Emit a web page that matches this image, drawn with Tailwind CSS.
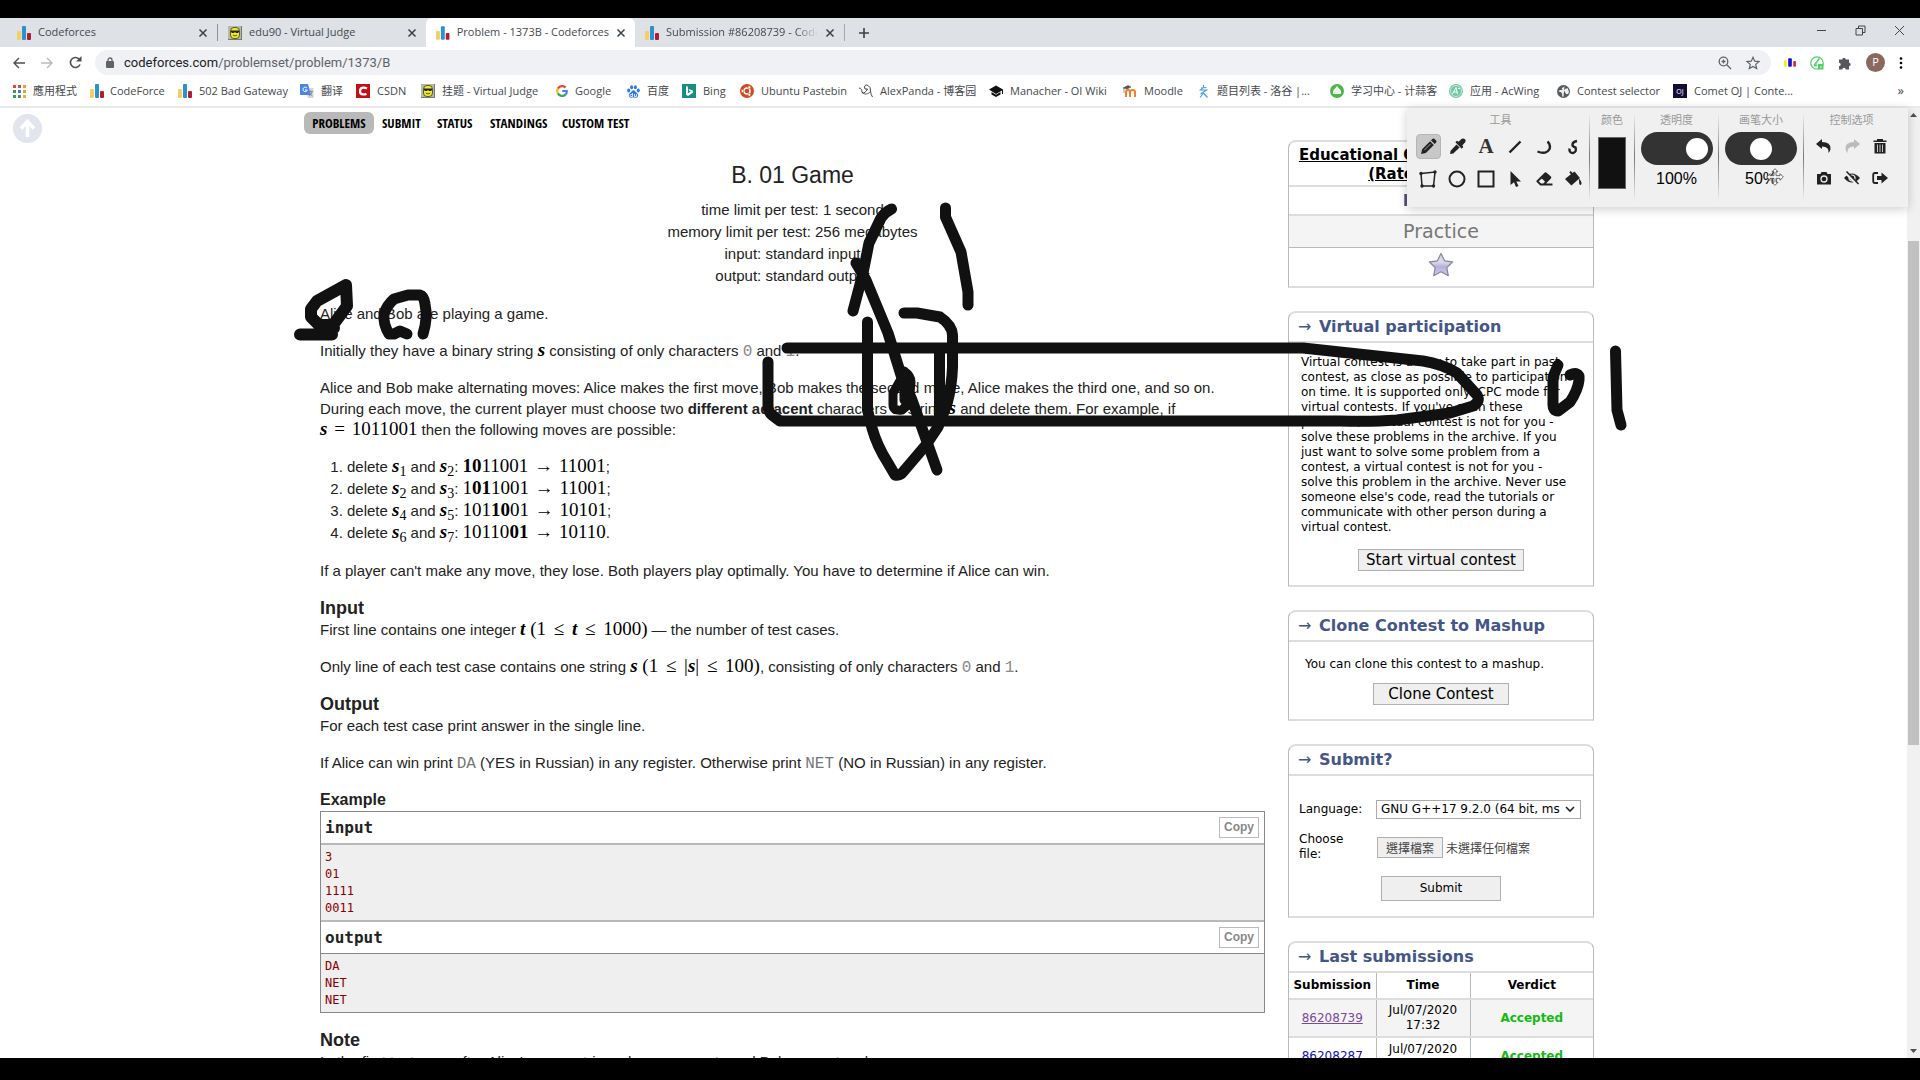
<!DOCTYPE html>
<html lang="en">
<head>
    <meta charset="UTF-8">
    <meta name="viewport" content="width=device-width, initial-scale=1.0">
    <title>Problem - 1373B - Codeforces</title>
    <script src="https://cdn.jsdelivr.net/npm/@tailwindcss/browser@4"></script>
</head>
<body class="bg-black">
    <!-- Shared icons -->
    <svg class="hidden">
        <symbol id="i-bars" viewBox="0 0 14 14">
            <rect x="0" y="5" width="4" height="9" rx="1" fill="#f6cf60"/>
            <rect x="5" y="0" width="4" height="14" rx="1" fill="#2a93cf"/>
            <rect x="10" y="7" width="4" height="7" rx="1" fill="#b01e2f"/>
        </symbol>
        <symbol id="i-vj" viewBox="0 0 14 14">
            <rect width="14" height="14" fill="#77776c"/>
            <rect width="13" height="13" fill="#b9b9a8"/>
            <rect x="2.500" y="1.500" width="9" height="11" rx="3.500" fill="#f3ee1c" stroke="#333" stroke-width=".8"/>
            <path d="M3 4.500h8v1.500l-1 1H8L7 6 6 7H4L3 6z" fill="#222"/>
            <path d="M4.800 9q2.200 2 4.400 0" fill="none" stroke="#222" stroke-width=".8"/>
        </symbol>
        <symbol id="i-x" viewBox="0 0 10 10">
            <path d="M1.500 1.500l7 7M8.500 1.500l-7 7" stroke="#3c4043" stroke-width="1.500" fill="none"/>
        </symbol>
    </svg>

    <div class="relative h-screen overflow-hidden">
        <div class="flex h-full flex-col pt-[18px] pb-[22px]">
            <!-- Tab strip -->
            <header class="shrink-0 bg-white font-['Open_Sans','Noto_Sans_CJK_TC',sans-serif] text-[11px] text-[#45494d]">
                <div class="flex h-[29px] items-stretch bg-[#dee1e6]">
                    <div class="flex w-[217px] items-center gap-[7px] pl-[17px] pr-[9px]">
                        <svg class="size-[14px]"><use href="#i-bars"/></svg>
                        <span class="flex-1">Codeforces</span>
                        <button aria-label="Close tab"><svg class="size-[10px]"><use href="#i-x"/></svg></button>
                    </div>
                    <div class="my-[6px] w-px bg-[#8c9095]"></div>
                    <div class="flex w-[208px] items-center gap-[7px] pl-[10px] pr-[9px]">
                        <svg class="size-[14px]"><use href="#i-vj"/></svg>
                        <span class="flex-1">edu90 - Virtual Judge</span>
                        <button aria-label="Close tab"><svg class="size-[10px]"><use href="#i-x"/></svg></button>
                    </div>
                    <div class="flex w-[209px] items-center gap-[7px] rounded-t-md bg-white pl-[10px] pr-[9px]">
                        <svg class="size-[14px]"><use href="#i-bars"/></svg>
                        <span class="flex-1 whitespace-nowrap">Problem - 1373B - Codeforces</span>
                        <button aria-label="Close tab"><svg class="size-[10px]"><use href="#i-x"/></svg></button>
                    </div>
                    <div class="flex w-[209px] items-center gap-[7px] pl-[10px] pr-[9px]">
                        <svg class="size-[14px] shrink-0"><use href="#i-bars"/></svg>
                        <span class="flex-1 overflow-hidden whitespace-nowrap mask-r-from-85%">Submission #86208739 - Codeforces</span>
                        <button aria-label="Close tab"><svg class="size-[10px]"><use href="#i-x"/></svg></button>
                    </div>
                    <div class="my-[6px] w-px bg-[#a5a8ac]"></div>
                    <button class="px-[13px]" aria-label="New tab">
                        <svg class="size-[12px]" viewBox="0 0 12 12"><path d="M6 1v10M1 6h10" stroke="#3c4043" stroke-width="1.600"/></svg>
                    </button>
                    <div class="ml-auto flex items-center gap-[28px] pb-[4px] pr-[15px]">
                        <button aria-label="Minimize"><svg class="size-[11px]" viewBox="0 0 11 11"><path d="M1 5.500h9" stroke="#444"/></svg></button>
                        <button aria-label="Restore"><svg class="size-[11px]" viewBox="0 0 11 11"><path d="M1 3.500h6.500V10H1zM3.500 3V1H10v6.500H8" fill="none" stroke="#444"/></svg></button>
                        <button aria-label="Close window"><svg class="size-[11px]" viewBox="0 0 11 11"><path d="M1 1l9 9M10 1l-9 9" stroke="#444"/></svg></button>
                    </div>
                </div>

                <!-- Address bar -->
                <div class="flex h-[31px] items-center">
                    <div class="flex w-[95px] items-center gap-[16px] pl-[13px]">
                        <button aria-label="Back"><svg class="size-[12px]" viewBox="0 0 12 12"><path d="M12 6H1M6 1L1 6l5 5" fill="none" stroke="#4c5054" stroke-width="1.400"/></svg></button>
                        <button aria-label="Forward"><svg class="size-[12px]" viewBox="0 0 12 12"><path d="M0 6h11M6 1l5 5-5 5" fill="none" stroke="#b8babd" stroke-width="1.400"/></svg></button>
                        <button aria-label="Reload"><svg class="size-[13px]" viewBox="0 0 13 13"><path d="M11 8.500A5 5 0 1 1 10.500 3.500" fill="none" stroke="#4c5054" stroke-width="1.600"/><path d="M12.500 0v5.500H7z" fill="#4c5054"/></svg></button>
                    </div>
                    <div class="flex h-[25px] flex-1 items-center rounded-full bg-[#eff1f4] px-[11px] font-[Roboto,sans-serif] text-[13px]">
                        <svg class="mr-[10px] h-[11px] w-[8px]" viewBox="0 0 8 11"><rect y="4" width="8" height="7" rx="1" fill="#5f6368"/><path d="M2 4V3a2 2 0 0 1 4 0v1" fill="none" stroke="#5f6368" stroke-width="1.300"/></svg>
                        <label for="url" class="text-[#202124]">codeforces.com</label>
                        <input id="url" type="text" value="/problemset/problem/1373/B" class="min-w-0 flex-1 bg-transparent text-[#5f6368] outline-none">
                        <button class="mr-[14px]" aria-label="Zoom"><svg class="size-[14px]" viewBox="0 0 14 14"><circle cx="5.500" cy="5.500" r="4.300" fill="none" stroke="#5f6368" stroke-width="1.300"/><path d="M8.800 8.800L13 13M5.500 3.500v4M3.500 5.500h4" stroke="#5f6368" stroke-width="1.300"/></svg></button>
                        <button aria-label="Bookmark"><svg class="size-[14px]" viewBox="0 0 14 14"><path d="M7 1.300l1.700 3.900 4.200.4-3.200 2.800 1 4.200L7 10.400l-3.700 2.200 1-4.200L1.100 5.600l4.200-.4z" fill="none" stroke="#5f6368" stroke-width="1.200"/></svg></button>
                    </div>
                    <div class="flex items-center gap-[14px] pl-[13px] pr-[17px]">
                        <svg class="h-[9px] w-[12px]" viewBox="0 0 13 9"><rect y="2" width="3" height="7" rx="1" fill="#fdf000"/><rect x="4.500" width="4" height="9" rx="1" fill="#1a12d8"/><rect x="10" y="3" width="3" height="6" rx="1" fill="#e8252c"/></svg>
                        <svg class="size-[14px]" viewBox="0 0 14 14"><circle cx="7" cy="7" r="6.200" fill="#fff" stroke="#52d266" stroke-width="1.300"/><path d="M4 9.500L9.500 2.500M4 9.500q2 1 3-1" fill="none" stroke="#52d266" stroke-width="1.500"/><path d="M8 8h5.500v5.500H8z" fill="#52d266"/><path d="M10 11.500l1-1.500 1 1.500z" fill="#fff"/></svg>
                        <svg class="size-[14px]" viewBox="0 0 14 14"><path d="M1 3.500h3.300a1.700 1.700 0 1 1 3.400 0H11v3.200a1.700 1.700 0 1 1 0 3.400V13.500H7.700a1.700 1.700 0 1 0-3.400 0H1v-3.300a1.700 1.700 0 1 0 0-3.400z" fill="#54585c"/></svg>
                        <button class="size-[19px] rounded-full bg-[#8a675f] text-white">P</button>
                        <button aria-label="Menu"><svg class="h-[12px] w-[4px]" viewBox="0 0 4 12"><circle cx="2" cy="1.500" r="1.300"/><circle cx="2" cy="6" r="1.300"/><circle cx="2" cy="10.500" r="1.300"/></svg></button>
                    </div>
                </div>

                <!-- Bookmarks -->
                <nav class="flex h-[30px] items-center border-b-2 border-[#e8eaed] pl-[13px] pb-[2px] whitespace-nowrap">
                    <a href="#" class="flex w-[77px] items-center gap-[7px]">
                        <svg class="size-[13px]" viewBox="0 0 13 13"><g fill="#e0493c"><rect width="3" height="3"/><rect x="5" width="3" height="3"/><rect x="10" width="3" height="3" fill="#e8a030"/></g><g fill="#3b9b58"><rect y="5" width="3" height="3"/><rect x="5" y="5" width="3" height="3" fill="#3c7de0"/><rect x="10" y="5" width="3" height="3" fill="#e8a030"/><rect y="10" width="3" height="3"/><rect x="5" y="10" width="3" height="3"/><rect x="10" y="10" width="3" height="3" fill="#e8b040"/></g></svg>應用程式</a>
                    <a href="#" class="flex w-[88px] items-center gap-[6px]"><svg class="size-[14px]"><use href="#i-bars"/></svg>CodeForce</a>
                    <a href="#" class="flex w-[122px] items-center gap-[7px]"><svg class="size-[14px]"><use href="#i-bars"/></svg>502 Bad Gateway</a>
                    <a href="#" class="flex w-[56px] items-center gap-[7px]">
                        <svg class="size-[14px]" viewBox="0 0 14 14"><path d="M5 4h8.500v10H8z" fill="#d4d7dc"/><path d="M0 0h8l3 11H0z" fill="#4a86e8"/><path d="M7 4.200A2.200 2.200 0 1 0 7.300 6H5" fill="none" stroke="#fff"/><path d="M8.500 7.500H13M10.700 6.500v1M9 12q3-1.500 3-4.500M9.500 8.500q1 2.500 3 3.500" fill="none" stroke="#7a7f87" stroke-width=".8"/></svg>翻译</a>
                    <a href="#" class="flex w-[65px] items-center gap-[7px]">
                        <svg class="size-[14px]" viewBox="0 0 14 14"><rect width="14" height="14" fill="#c40f14"/><path d="M11 4.500Q9 3.500 7 3.700 4 4 4 7.200t3 3.200q2 .2 3.500-.700" fill="none" stroke="#fff" stroke-width="2.200"/></svg>CSDN</a>
                    <a href="#" class="flex w-[135px] items-center gap-[7px]"><svg class="size-[14px]"><use href="#i-vj"/></svg>挂题 - Virtual Judge</a>
                    <a href="#" class="flex w-[71px] items-center gap-[7px]">
                        <svg class="size-[12px]" viewBox="0 0 12 12" fill="none" stroke-width="2.200"><path d="M9.600 2.600A4.800 4.800 0 0 0 1.900 3.600" stroke="#ea4335"/><path d="M1.900 3.600a4.800 4.800 0 0 0 0 4.800" stroke="#fbbc05"/><path d="M1.900 8.400a4.800 4.800 0 0 0 7.500 1.200" stroke="#34a853"/><path d="M9.400 9.600Q11 8 10.800 6H6.200" stroke="#4285f4"/></svg>Google</a>
                    <a href="#" class="flex w-[55px] items-center gap-[7px]">
                        <svg class="size-[13px]" viewBox="0 0 13 13" fill="#2e78e4"><ellipse cx="1.700" cy="5.500" rx="1.500" ry="2"/><ellipse cx="4.600" cy="2.200" rx="1.500" ry="2"/><ellipse cx="8.400" cy="2.200" rx="1.500" ry="2"/><ellipse cx="11.300" cy="5.500" rx="1.500" ry="2"/><path d="M6.500 5.200c1.500 0 2 1.500 3.200 2.500s2 2.300 1 4c-1 1.500-2.500.8-4.200.8s-3.200.7-4.200-.8c-1-1.700-.2-3 1-4s1.700-2.500 3.200-2.500z"/><path d="M5.500 8v3.500H4a1 1 0 0 1 0-2h1.500M7.500 9v2.500h2V9" fill="none" stroke="#fff" stroke-width=".8"/></svg>百度</a>
                    <a href="#" class="flex w-[58px] items-center gap-[7px]">
                        <svg class="size-[14px]" viewBox="0 0 14 14"><rect width="14" height="14" fill="#168f80"/><path d="M4 2l2 .7v6.500l2.700-1.600-1.300-.6-.8-2 4.300 1.500v2.200L6 12l-2-1.200z" fill="#fff"/></svg>Bing</a>
                    <a href="#" class="flex w-[119px] items-center gap-[7px]">
                        <svg class="size-[14px]" viewBox="0 0 14 14"><circle cx="7" cy="7" r="7" fill="#cf4a1c"/><circle cx="7" cy="7" r="3" fill="none" stroke="#fff" stroke-width="1.500"/><g fill="#fff" stroke="#cf4a1c" stroke-width=".6"><circle cx="2.600" cy="7" r="1.500"/><circle cx="9.300" cy="3.200" r="1.500"/><circle cx="9.300" cy="10.800" r="1.500"/></g></svg>Ubuntu Pastebin</a>
                    <a href="#" class="flex w-[130px] items-center gap-[7px]">
                        <svg class="size-[14px]" viewBox="0 0 14 14" fill="none" stroke="#444"><path d="M0 4q3 0 3 4.500Q6 10 8.500 5 5 6 5.500 3T9 1.500t2.500 5.500q.3 4 2 6"/><path d="M3 8.500Q7 12 11 8" stroke-width=".8"/></svg>AlexPanda - 博客园</a>
                    <a href="#" class="flex w-[134px] items-center gap-[7px]">
                        <svg class="size-[14px]" viewBox="0 0 14 14"><path d="M7 1.500L14 5.500v4.500h-1V6.500l-6 3.500L0 5.500z" fill="#111"/><path d="M2.500 8v2.500L7 13l4.500-2.500V8L7 10.800z" fill="#111"/></svg>Manacher - OI Wiki</a>
                    <a href="#" class="flex w-[74px] items-center gap-[7px]">
                        <svg class="size-[14px]" viewBox="0 0 14 14" fill="none"><path d="M3 13V8q0-2 2-2t2 2v5M7 13V8q0-2 2.500-2T12 8v5" stroke="#f08030" stroke-width="2"/><path d="M0 4l5-2.500L8 3 4 5zM1 4.500V9" fill="#555" stroke="#555" stroke-width=".6"/></svg>Moodle</a>
                    <a href="#" class="flex w-[133px] items-center gap-[7px]">
                        <svg class="size-[13px]" viewBox="0 0 13 13" fill="none" stroke="#4e9fe0" stroke-width="1.200"><path d="M6.500 0v2.500L3.500 5h6L3.500 9M3 12.500L6.500 8M5.500 7l5 5.500M4 3l5.500-.500"/></svg>题目列表 - 洛谷 |...</a>
                    <a href="#" class="flex w-[119px] items-center gap-[7px]">
                        <svg class="size-[14px]" viewBox="0 0 14 14"><circle cx="7" cy="7" r="7" fill="#4db748"/><path d="M7 2q1.500 2 3 3.500 2 2.500.5 4.500H3.500Q2 8 4 5.500 5.500 4 7 2z" fill="#fff"/><path d="M7 5v5M5 7v3M9 7v3" stroke="#b4e0b2" stroke-width=".6"/></svg>学习中心 - 计蒜客</a>
                    <a href="#" class="flex w-[108px] items-center gap-[7px]">
                        <svg class="size-[14px]" viewBox="0 0 14 14"><circle cx="7" cy="7" r="7" fill="#6cc8a8"/><circle cx="7" cy="7" r="5.500" fill="none" stroke="#d8f2d0" stroke-width=".8"/><path d="M3.500 10L7 3.500 8.500 10M5 8h3M9 4.500h2" fill="none" stroke="#fff"/></svg>应用 - AcWing</a>
                    <a href="#" class="flex w-[116px] items-center gap-[7px]">
                        <svg class="size-[13px]" viewBox="0 0 14 14"><circle cx="7" cy="7" r="7" fill="#555a5f"/><path d="M8 1.500L5 3.500l1 2H3L1.500 7l2.500.500 1.500 2V12L7 12.800M9 4l2.500-.500L12.800 7l-.5 2.500L10 10 8.500 7.500 7.500 6z" fill="#eee"/></svg>Contest selector</a>
                    <a href="#" class="flex items-center gap-[7px]">
                        <span class="flex size-[14px] items-center justify-center bg-[#120c36] text-[7px] leading-none text-white">OJ</span>Comet OJ | Conte...</a>
                    <button class="ml-auto pr-[16px] text-[13px]" aria-label="More bookmarks">»</button>
                </nav>
            </header>

            <!-- Page -->
            <div class="flex min-h-0 flex-1 bg-white">
                <div class="relative flex-1 overflow-hidden">
                    <button class="absolute left-[13px] top-[6px]" aria-label="Scroll to top">
                        <svg class="size-[29px]" viewBox="0 0 29 29"><circle cx="14.500" cy="14.500" r="14.500" fill="#e2e4ee"/><path d="M14.500 23V8M8 14.500L14.500 7.500 21 14.500" fill="none" stroke="#fff" stroke-width="3.600"/></svg>
                    </button>
                    <div class="flex gap-[23px] pl-[304px] pr-[313px]">
                        <main class="min-w-0 flex-1 font-['Liberation_Sans',Arial,sans-serif] text-[15px] leading-[21px] text-[#222]">
                            <nav class="flex pt-[4px] font-['Open_Sans_Condensed','Roboto_Condensed',sans-serif] text-[13px] leading-[22px] font-bold text-black">
                                <a href="#" class="w-[70px] rounded-md bg-[#b9b9b9] text-center">PROBLEMS</a>
                                <a href="#" class="w-[55px] pl-[8px]">SUBMIT</a>
                                <a href="#" class="w-[53px] pl-[8px]">STATUS</a>
                                <a href="#" class="w-[72px] pl-[8px]">STANDINGS</a>
                                <a href="#" class="pl-[8px]">CUSTOM TEST</a>
                            </nav>

                            <article class="space-y-[16px] pl-[16px] pt-[27px]">
                                <div class="text-center leading-[22px]">
                                    <h1 class="mb-[10px] text-[23px] leading-[28px]">B. 01 Game</h1>
                                    <p>time limit per test: 1 second</p>
                                    <p>memory limit per test: 256 megabytes</p>
                                    <p>input: standard input</p>
                                    <p>output: standard output</p>
                                </div>
                                <p>Alice and Bob are playing a game.</p>
                                <p>Initially they have a binary string <i class="font-['Liberation_Serif',serif] text-[19px] leading-none font-bold text-black">s</i> consisting of only characters <code class="font-['Liberation_Mono',monospace] text-[16px] leading-none text-[#888]">0</code> and <code class="font-['Liberation_Mono',monospace] text-[16px] leading-none text-[#888]">1</code>.</p>
                                <p>Alice and Bob make alternating moves: Alice makes the first move, Bob makes the second move, Alice makes the third one, and so on.<br>
                                    During each move, the current player must choose two <b>different adjacent</b> characters of string <i class="font-['Liberation_Serif',serif] text-[19px] leading-none font-bold text-black">s</i> and delete them. For example, if<br>
                                    <span class="font-['Liberation_Serif',serif] text-[19px] leading-none text-black"><b><i>s</i></b> <span class="px-[2px]">=</span> 1011001</span> then the following moves are possible:</p>
                                <ol class="list-decimal pl-[27px] leading-[22px]">
                                    <li>delete <span class="font-['Liberation_Serif',serif] text-[19px] leading-none text-black"><b><i>s</i></b><sub class="text-[14px]">1</sub></span> and <span class="font-['Liberation_Serif',serif] text-[19px] leading-none text-black"><b><i>s</i></b><sub class="text-[14px]">2</sub></span>: <span class="font-['Liberation_Serif',serif] text-[19px] leading-none text-black"><b>10</b>11001 <span class="px-[1px]">→</span> 11001</span>;</li>
                                    <li>delete <span class="font-['Liberation_Serif',serif] text-[19px] leading-none text-black"><b><i>s</i></b><sub class="text-[14px]">2</sub></span> and <span class="font-['Liberation_Serif',serif] text-[19px] leading-none text-black"><b><i>s</i></b><sub class="text-[14px]">3</sub></span>: <span class="font-['Liberation_Serif',serif] text-[19px] leading-none text-black">1<b>01</b>1001 <span class="px-[1px]">→</span> 11001</span>;</li>
                                    <li>delete <span class="font-['Liberation_Serif',serif] text-[19px] leading-none text-black"><b><i>s</i></b><sub class="text-[14px]">4</sub></span> and <span class="font-['Liberation_Serif',serif] text-[19px] leading-none text-black"><b><i>s</i></b><sub class="text-[14px]">5</sub></span>: <span class="font-['Liberation_Serif',serif] text-[19px] leading-none text-black">101<b>10</b>01 <span class="px-[1px]">→</span> 10101</span>;</li>
                                    <li>delete <span class="font-['Liberation_Serif',serif] text-[19px] leading-none text-black"><b><i>s</i></b><sub class="text-[14px]">6</sub></span> and <span class="font-['Liberation_Serif',serif] text-[19px] leading-none text-black"><b><i>s</i></b><sub class="text-[14px]">7</sub></span>: <span class="font-['Liberation_Serif',serif] text-[19px] leading-none text-black">10110<b>01</b> <span class="px-[1px]">→</span> 10110</span>.</li>
                                </ol>
                                <p>If a player can't make any move, they lose. Both players play optimally. You have to determine if Alice can win.</p>
                                <div>
                                    <h2 class="text-[18px] leading-[22px] font-bold">Input</h2>
                                    <p>First line contains one integer <span class="font-['Liberation_Serif',serif] text-[19px] leading-none text-black"><b><i>t</i></b> (1 <span class="px-[3px]">≤</span> <b><i>t</i></b> <span class="px-[3px]">≤</span> 1000)</span> — the number of test cases.</p>
                                </div>
                                <p>Only line of each test case contains one string <span class="font-['Liberation_Serif',serif] text-[19px] leading-none text-black"><b><i>s</i></b> (1 <span class="px-[3px]">≤</span> |<b><i>s</i></b>| <span class="px-[3px]">≤</span> 100)</span>, consisting of only characters <code class="font-['Liberation_Mono',monospace] text-[16px] leading-none text-[#888]">0</code> and <code class="font-['Liberation_Mono',monospace] text-[16px] leading-none text-[#888]">1</code>.</p>
                                <div>
                                    <h2 class="text-[18px] leading-[22px] font-bold">Output</h2>
                                    <p>For each test case print answer in the single line.</p>
                                </div>
                                <p>If Alice can win print <code class="font-['Liberation_Mono',monospace] text-[16px] leading-none text-[#777]">DA</code> (YES in Russian) in any register. Otherwise print <code class="font-['Liberation_Mono',monospace] text-[16px] leading-none text-[#777]">NET</code> (NO in Russian) in any register.</p>
                                <section>
                                    <h3 class="text-[16px] font-bold">Example</h3>
                                    <div class="mt-px border border-[#888] font-['DejaVu_Sans_Mono',monospace]">
                                        <div class="flex h-[31px] items-center justify-between pl-[4px] pr-[5px]">
                                            <h4 class="text-[16px] font-bold">input</h4>
                                            <button class="border border-[#bbb] px-[4px] font-['Liberation_Sans',sans-serif] text-[12px] leading-[19px] font-bold text-[#888]">Copy</button>
                                        </div>
                                        <pre class="border-y-2 border-[#b9b9b9] bg-[#efefef] px-[4px] pt-[4px] pb-[3px] font-[inherit] text-[12px] leading-[17px] text-[#880000]">3
01
1111
0011</pre>
                                        <div class="flex h-[31px] items-center justify-between pl-[4px] pr-[5px]">
                                            <h4 class="text-[16px] font-bold">output</h4>
                                            <button class="border border-[#bbb] px-[4px] font-['Liberation_Sans',sans-serif] text-[12px] leading-[19px] font-bold text-[#888]">Copy</button>
                                        </div>
                                        <pre class="border-t border-[#888] bg-[#efefef] px-[4px] pt-[4px] pb-[3px] font-[inherit] text-[12px] leading-[17px] text-[#880000]">DA
NET
NET</pre>
                                    </div>
                                </section>
                                <div>
                                    <h2 class="text-[18px] leading-[22px] font-bold">Note</h2>
                                    <p>In the first test case after Alice's move string <i>s</i> become empty and Bob can not make any move.</p>
                                </div>
                            </article>
                        </main>

                        <aside class="w-[306px] shrink-0 space-y-[23px] pt-[32px] font-['DejaVu_Sans',Verdana,sans-serif] text-[12px] leading-[15px]">
                            <section class="rounded-t-lg border border-t-2 border-b-2 border-[#b9b9b9] border-t-[#ddd] border-b-[#ddd] text-center">
                                <a href="#" class="block h-[45px] border-b-2 border-[#ddd] pt-[4px] text-[15px] leading-[19px] font-bold underline">Educational Codeforces Round 90<br>(Rated for Div. 2)</a>
                                <p class="h-[29px] border-b-2 border-[#ddd] pt-[4px] text-[16px] leading-[20px] font-bold text-[#445588]">Finished</p>
                                <p class="h-[32px] border-b border-[#b9b9b9] bg-[#f4f4f4] text-[19px] leading-[31px] text-[#777]">Practice</p>
                                <div class="flex h-[38px] justify-center pt-[4px]">
                                    <button class="h-[26px]" aria-label="Add to favourites">
                                        <svg class="size-[26px]" viewBox="0 0 26 26"><defs><linearGradient id="star" x2="0" y2="1"><stop offset=".4" stop-color="#d9d8e4"/><stop offset=".6" stop-color="#b3b0dc"/><stop offset="1" stop-color="#cfcdf0"/></linearGradient></defs><path d="M13 1.500l3.600 7.300 8 1.200-5.800 5.600 1.400 8-7.200-3.800-7.200 3.800 1.400-8L1.400 10l8-1.200z" fill="url(#star)" stroke="#8b89a0" stroke-width="1.300" stroke-linejoin="round"/></svg>
                                    </button>
                                </div>
                            </section>

                            <section class="rounded-t-lg border border-t-2 border-b-2 border-[#b9b9b9] border-t-[#ddd] border-b-[#ddd]">
                                <h2 class="h-[30px] border-b-2 border-[#ddd] pl-[9px] text-[16px] leading-[28px] font-bold text-[#445588]"><span class="mr-[2px] font-normal">→</span> Virtual participation</h2>
                                <p class="pl-[12px] pt-[12px] whitespace-nowrap">Virtual contest is a way to take part in past<br>contest, as close as possible to participation<br>on time. It is supported only ICPC mode for<br>virtual contests. If you've seen these<br>problems, a virtual contest is not for you -<br>solve these problems in the archive. If you<br>just want to solve some problem from a<br>contest, a virtual contest is not for you -<br>solve this problem in the archive. Never use<br>someone else's code, read the tutorials or<br>communicate with other person during a<br>virtual contest.</p>
                                <div class="py-[14px] text-center">
                                    <button class="w-[166px] border border-[#b0b0b0] bg-[#efefef] text-[15px] leading-[20px]">Start virtual contest</button>
                                </div>
                            </section>

                            <section class="rounded-t-lg border border-t-2 border-b-2 border-[#b9b9b9] border-t-[#ddd] border-b-[#ddd]">
                                <h2 class="h-[30px] border-b-2 border-[#ddd] pl-[9px] text-[16px] leading-[28px] font-bold text-[#445588]"><span class="mr-[2px] font-normal">→</span> Clone Contest to Mashup</h2>
                                <p class="pl-[16px] pt-[15px]">You can clone this contest to a mashup.</p>
                                <div class="pt-[11px] pb-[14px] text-center">
                                    <button class="w-[136px] border border-[#b0b0b0] bg-[#efefef] text-[15px] leading-[20px]">Clone Contest</button>
                                </div>
                            </section>

                            <section class="rounded-t-lg border border-t-2 border-b-2 border-[#b9b9b9] border-t-[#ddd] border-b-[#ddd]">
                                <h2 class="h-[30px] border-b-2 border-[#ddd] pl-[9px] text-[16px] leading-[28px] font-bold text-[#445588]"><span class="mr-[2px] font-normal">→</span> Submit?</h2>
                                <form class="pt-[24px] pb-[15px]">
                                    <div class="flex items-center pl-[10px]">
                                        <label for="lang" class="w-[77px]">Language:</label>
                                        <div class="relative">
                                            <select id="lang" class="h-[19px] w-[205px] appearance-none border border-[#aaa] bg-white pl-[4px] pr-[20px] text-[12px] leading-[17px]">
                                                <option>GNU G++17 9.2.0 (64 bit, msys 2)</option>
                                            </select>
                                            <svg class="pointer-events-none absolute right-[6px] top-[6px] h-[7px] w-[10px]" viewBox="0 0 10 7"><path d="M1 1l4 4 4-4" fill="none" stroke="#222" stroke-width="1.600"/></svg>
                                        </div>
                                    </div>
                                    <div class="mt-[13px] flex items-center pl-[10px]">
                                        <label for="file" class="w-[78px]">Choose<br>file:</label>
                                        <input id="file" type="file" class="sr-only">
                                        <label for="file" class="border border-[#b0b0b0] bg-[#efefef] px-[8px] font-['Noto_Sans_CJK_TC',sans-serif] leading-[19px] text-[#444]">選擇檔案</label>
                                        <span class="pl-[3px] font-['Noto_Sans_CJK_TC',sans-serif] text-[#444]">未選擇任何檔案</span>
                                    </div>
                                    <div class="mt-[14px] text-center">
                                        <button type="button" class="w-[120px] border border-[#b0b0b0] bg-[#efefef] text-[12px] leading-[23px]">Submit</button>
                                    </div>
                                </form>
                            </section>

                            <section class="rounded-t-lg border border-t-2 border-[#b9b9b9] border-t-[#ddd]">
                                <h2 class="h-[30px] border-b-2 border-[#ddd] pl-[9px] text-[16px] leading-[28px] font-bold text-[#445588]"><span class="mr-[2px] font-normal">→</span> Last submissions</h2>
                                <table class="w-full table-fixed text-center">
                                    <thead>
                                        <tr class="h-[26px] border-b-2 border-[#ddd]">
                                            <th class="w-[87px] border-r border-[#b9b9b9]">Submission</th>
                                            <th class="w-[94px] border-r border-[#b9b9b9]">Time</th>
                                            <th>Verdict</th>
                                        </tr>
                                    </thead>
                                    <tbody>
                                        <tr class="h-[38px] border-b-2 border-[#ddd] bg-[#f4f4f4]">
                                            <td class="border-r border-[#b9b9b9]"><a href="#" class="text-[#7a4a9a] underline">86208739</a></td>
                                            <td class="border-r border-[#b9b9b9]">Jul/07/2020<br>17:32</td>
                                            <td class="font-bold text-[#11bb11]">Accepted</td>
                                        </tr>
                                        <tr class="h-[38px]">
                                            <td class="border-r border-[#b9b9b9]"><a href="#" class="text-[#1111bb] underline">86208287</a></td>
                                            <td class="border-r border-[#b9b9b9]">Jul/07/2020<br>17:26</td>
                                            <td class="font-bold text-[#11bb11]">Accepted</td>
                                        </tr>
                                    </tbody>
                                </table>
                            </section>
                        </aside>
                    </div>
                </div>

                <!-- Scrollbar -->
                <div class="flex w-[13px] shrink-0 flex-col items-center justify-between bg-[#f1f1f1] py-[5px]">
                    <svg class="h-[4px] w-[7px]" viewBox="0 0 7 4"><path d="M0 4l3.500-4L7 4z" fill="#505050"/></svg>
                    <div class="mb-[181px] h-[504px] w-[11px] bg-[#c1c1c1]"></div>
                    <svg class="h-[4px] w-[7px]" viewBox="0 0 7 4"><path d="M0 0l3.500 4L7 0z" fill="#505050"/></svg>
                </div>
            </div>
        </div>

        <!-- Ink drawn over the page -->
        <svg class="pointer-events-none absolute inset-0 size-full" viewBox="0 0 1920 1080" fill="none" stroke="#111" stroke-width="11" stroke-linecap="round" stroke-linejoin="round">
            <path d="M346 285L317 301 311 309V317L319 325H333L347 306ZM300 334.500H332M321 329L334 328" stroke-width="12"/>
            <path d="M423 334Q428 318 425 304 424 296 420 295H408L394 299Q387 305 384 314 383 324 389 334H394L400 331 407 334" stroke-width="11"/>
            <path d="M891.500 209Q885 212 881 218L869 243 863 273 853 311"/>
            <path d="M945.500 208V217L961 252 968 292V305"/>
            <path d="M856 263L866 280 888 333 901 375 912 400 937 470"/>
            <path d="M904 371Q911 376 911 382L909 404 902 410Q893 411 893 405V393L901 379ZM904 380V400" stroke-width="9"/>
            <path d="M867.500 322V410L872 428Q877 446 888 463L895 475Q900 476 903 472L926 445 938 427 947 404Q952 385 952.500 367V335Q952 325 940 317L917 313H904"/>
            <path d="M939.500 350V420M768 362V405Q768 412 772 415L780 421H1340Q1372 422 1397 420L1450 413 1473 406Q1481 401 1477 395L1457 373Q1442 364 1423 361L1303 348H787"/>
            <path d="M1558 365L1553 377V405Q1553 411 1558 411L1570 402Q1578 390 1579 380V376Q1576 372 1570 375"/>
            <path d="M1615.500 351L1617 410 1621 425"/>
        </svg>

        <!-- Drawing toolbar -->
        <div class="absolute right-[12px] top-[108px] flex h-[99px] bg-[#f0f0f0] pl-[5px] pr-[9px] font-['Liberation_Sans',sans-serif] shadow-[0_2px_10px_rgba(0,0,0,0.2)]">
            <section class="flex w-[177px] flex-col items-center">
                <h2 class="pt-[2px] font-['Noto_Sans_CJK_SC',sans-serif] text-[11px] leading-[18px] text-[#999]">工具</h2>
                <div class="mt-[6px] grid grid-cols-6 gap-x-[4px] gap-y-[7px]">
                    <button class="flex size-[25px] items-center justify-center rounded-sm border border-[#b5b5b5] bg-[#c8c8c8]" aria-label="Pencil"><svg class="size-[17px]" viewBox="0 0 16 16" fill="#222"><path d="M1 15l1-4.500L9.500 3 13 6.500 5.500 14zM10.300 2.200L12 .700q.8-.5 1.500 0L15.300 2.500q.5.700 0 1.500l-1.500 1.700z"/><path d="M4 11.500l6-6" stroke="#bbb" stroke-width=".8"/></svg></button>
                    <button class="flex size-[25px] items-center justify-center" aria-label="Eyedropper"><svg class="size-[17px]" viewBox="0 0 16 16" fill="#222"><path d="M1 15l.5-3L7 6 10 9 4 14.500zM6 4l1.500-1.500 1.500 1L12 .8q1.800-1 3 .3t.2 3L12.500 7l1 1.500-1.500 1.500z"/></svg></button>
                    <button class="flex size-[25px] items-center justify-center font-['Liberation_Serif',serif] text-[21px] leading-none font-bold text-[#333]" aria-label="Text">A</button>
                    <button class="flex size-[25px] items-center justify-center" aria-label="Line"><svg class="size-[16px]" viewBox="0 0 16 16"><path d="M2.500 13.500L13.500 2.500" stroke="#222" stroke-width="2.400"/></svg></button>
                    <button class="flex size-[25px] items-center justify-center" aria-label="Arc"><svg class="size-[16px]" viewBox="0 0 16 16"><path d="M1.500 12.500Q10 16 13.500 10 15 5.500 11.500 2.500" stroke="#222" stroke-width="2.400" fill="none"/></svg></button>
                    <button class="flex size-[25px] items-center justify-center" aria-label="Curve"><svg class="size-[16px]" viewBox="0 0 16 16"><path d="M12 2Q7 3 7.500 6.500 8.500 8 10.500 8.500 12 13 8 14 4 14 4.500 9.500" stroke="#222" stroke-width="2.400" fill="none"/></svg></button>
                    <button class="flex size-[25px] items-center justify-center" aria-label="Polygon"><svg class="size-[18px]" viewBox="0 0 18 18" fill="#222"><path d="M2 3.500L16 2l-1.500 14H3z" fill="none" stroke="#222" stroke-width="1.500"/><circle cx="2" cy="3.500" r="1.700"/><circle cx="16" cy="2" r="1.700"/><circle cx="14.500" cy="16" r="1.700"/><circle cx="3" cy="16" r="1.700"/></svg></button>
                    <button class="flex size-[25px] items-center justify-center" aria-label="Ellipse"><svg class="size-[18px]" viewBox="0 0 18 18"><circle cx="9" cy="9" r="7.500" fill="none" stroke="#222" stroke-width="2"/></svg></button>
                    <button class="flex size-[25px] items-center justify-center" aria-label="Rectangle"><svg class="size-[18px]" viewBox="0 0 18 18"><rect x="1.500" y="1.500" width="15" height="15" fill="none" stroke="#222" stroke-width="2"/></svg></button>
                    <button class="flex size-[25px] items-center justify-center" aria-label="Select"><svg class="size-[16px]" viewBox="0 0 16 16"><path d="M3.500 0L14 10.500H9.300l2.200 4.500-2.500 1-2-4.800L3.500 14z" fill="#222"/></svg></button>
                    <button class="flex size-[25px] items-center justify-center" aria-label="Eraser"><svg class="size-[17px]" viewBox="0 0 16 16"><path d="M.5 10L8 2.500q1-1 2 0L14 6q1 1 0 2L9.500 12.800H15.500v1.700H4L.5 11q-.5-.5 0-1zM2.500 10.500l2.300 2.300h2L8.500 11 5.500 8z" fill="#222" fill-rule="evenodd"/></svg></button>
                    <button class="flex size-[25px] items-center justify-center" aria-label="Fill"><svg class="size-[17px]" viewBox="0 0 16 16" fill="#222"><path d="M0 8.500L5.500 4 4 2l1.500-1L7 2.800 9 1.500 14 7.500 6 14.500zM13 8q3 3 2.500 5t-2 .5z"/></svg></button>
                </div>
            </section>
            <div class="mt-[5px] h-[88px] w-px bg-linear-to-b from-transparent via-[#777] to-transparent"></div>
            <section class="flex w-[44px] flex-col items-center">
                <h2 class="pt-[2px] font-['Noto_Sans_CJK_SC',sans-serif] text-[11px] leading-[18px] text-[#999]">颜色</h2>
                <button class="mt-[9px] h-[52px] w-[28px] border border-[#666] bg-[#111]" aria-label="Colour"></button>
            </section>
            <div class="mt-[5px] h-[88px] w-px bg-linear-to-b from-transparent via-[#777] to-transparent"></div>
            <section class="flex w-[83px] flex-col items-center">
                <label for="opacity" class="pt-[2px] font-['Noto_Sans_CJK_SC',sans-serif] text-[11px] leading-[18px] text-[#999]">透明度</label>
                <input id="opacity" type="range" value="100" class="mt-[4px] h-[33px] w-[72px] appearance-none rounded-full bg-[#333] px-[5px] [&::-webkit-slider-thumb]:size-[22px] [&::-webkit-slider-thumb]:appearance-none [&::-webkit-slider-thumb]:rounded-full [&::-webkit-slider-thumb]:bg-white">
                <output for="opacity" class="pt-[4px] text-[16px] leading-[20px]">100%</output>
            </section>
            <div class="mt-[5px] h-[88px] w-px bg-linear-to-b from-transparent via-[#777] to-transparent"></div>
            <section class="relative flex w-[84px] flex-col items-center">
                <label for="size" class="pt-[2px] font-['Noto_Sans_CJK_SC',sans-serif] text-[11px] leading-[18px] text-[#999]">画笔大小</label>
                <input id="size" type="range" value="50" class="mt-[4px] h-[33px] w-[72px] appearance-none rounded-full bg-[#333] px-[5px] [&::-webkit-slider-thumb]:size-[22px] [&::-webkit-slider-thumb]:appearance-none [&::-webkit-slider-thumb]:rounded-full [&::-webkit-slider-thumb]:bg-white">
                <output for="size" class="pt-[4px] text-[16px] leading-[20px]">50%</output>
                <!-- Move cursor -->
                <svg class="absolute left-[47px] top-[60px] size-[18px]" viewBox="0 0 18 18"><path d="M9 .700l3 3h-2v4h4v-2l3.300 3.300-3.300 3.300v-2h-4v4h2l-3 3-3-3h2v-4H4v2L.700 9 4 5.700v2h4v-4H6z" fill="#fff" stroke="#555" stroke-width=".9"/></svg>
            </section>
            <div class="mt-[5px] h-[88px] w-px bg-linear-to-b from-transparent via-[#777] to-transparent"></div>
            <section class="flex w-[95px] flex-col items-center">
                <h2 class="pt-[2px] font-['Noto_Sans_CJK_SC',sans-serif] text-[11px] leading-[18px] text-[#999]">控制选项</h2>
                <div class="mt-[6px] grid grid-cols-3 gap-x-[4px] gap-y-[8px]">
                    <button class="flex size-[24px] items-center justify-center" aria-label="Undo"><svg class="size-[16px]" viewBox="0 0 16 16"><path d="M0 6l6-5v3q9 0 8.500 7-.3 2.500-2 4Q13.500 8.500 6 8.500V11z" fill="#222"/></svg></button>
                    <button class="flex size-[24px] items-center justify-center" aria-label="Redo"><svg class="size-[16px]" viewBox="0 0 16 16"><path d="M16 6l-6-5v3Q1 4 1.500 11q.3 2.500 2 4Q2.500 8.500 10 8.500V11z" fill="#bbb"/></svg></button>
                    <button class="flex size-[24px] items-center justify-center" aria-label="Delete"><svg class="size-[16px]" viewBox="0 0 16 16"><path d="M1.500 2.500H5V1h6v1.500h3.500V4h-13zM2.500 5h11v10.500h-11z" fill="#222"/><path d="M5.500 6.500V14M8 6.500V14M10.500 6.500V14" stroke="#eee" stroke-width=".8"/></svg></button>
                    <button class="flex size-[24px] items-center justify-center" aria-label="Screenshot"><svg class="size-[16px]" viewBox="0 0 16 16"><path d="M1 4h3.500l1-2h5l1 2H15v10.500H1z" fill="#222"/><circle cx="8" cy="9" r="3" fill="none" stroke="#eee" stroke-width="1.300"/></svg></button>
                    <button class="flex size-[24px] items-center justify-center" aria-label="Hide"><svg class="size-[16px]" viewBox="0 0 16 16"><path d="M0 8Q8-1 16 8 8 17 0 8z" fill="#222"/><circle cx="8" cy="8" r="3" fill="none" stroke="#eee" stroke-width="1.200"/><path d="M1.500 2.500l12 12" stroke="#f0f0f0" stroke-width="3"/><path d="M2.500 1.500l12 12.500" stroke="#222" stroke-width="1.500"/></svg></button>
                    <button class="flex size-[24px] items-center justify-center" aria-label="Exit"><svg class="size-[16px]" viewBox="0 0 16 16"><path d="M6 3H3Q1.200 3 1.200 5v6q0 2 1.800 2h3" fill="none" stroke="#222" stroke-width="1.800"/><path d="M5 6h4.500V2.500L16 8l-6.500 5.500V10H5z" fill="#222"/></svg></button>
                </div>
            </section>
        </div>
    </div>
</body>
</html>
